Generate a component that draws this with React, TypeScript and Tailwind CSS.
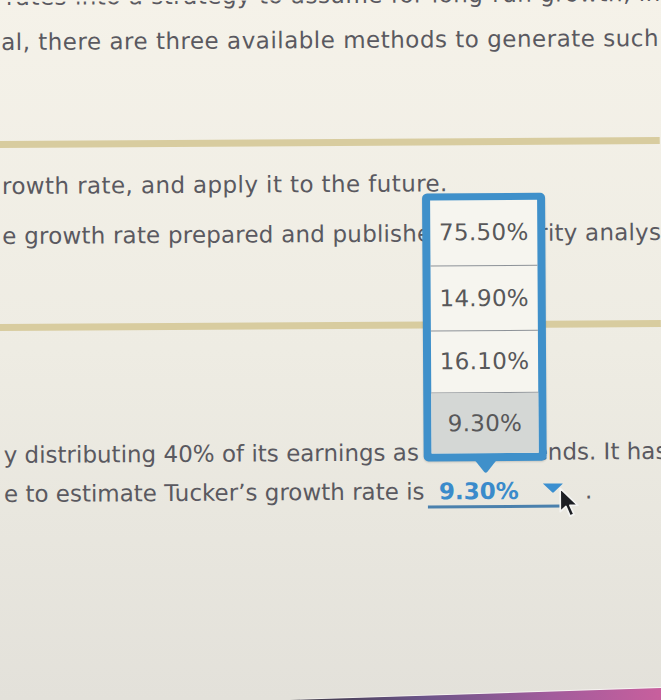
const options = [
  { label: "75.50%", h: "h-[66px]" },
  { label: "14.90%", h: "h-[65px]" },
  { label: "16.10%", h: "h-[62px]" },
  { label: "9.30%", h: "h-[60px]", selected: true },
];

function Dropdown() {
  return (
    <div className="absolute left-[423px] top-[194px] z-10 w-[123px]">
      <div className="rounded-[5px] border-x-[8px] border-t-[7px] border-b-[8px] border-[#3f90ca] bg-[#f6f5ef] shadow-[0_1px_2px_rgba(0,0,0,0.15)]">
        {options.map((o, i) => (
          <div
            key={o.label}
            className={
              "flex items-center justify-center tracking-[0.3px] text-[#58585a] " +
              o.h +
              (i < options.length - 1 ? " border-b border-[#8d9298]" : "") +
              (o.selected ? " bg-[#d4d7d5]" : "")
            }
          >
            {o.label}
          </div>
        ))}
      </div>
      {/* pointer */}
      <svg className="mx-auto -mt-[1px] block" width="22" height="13" viewBox="0 0 22 13">
        <path d="M0 0 L22 0 L12.5 12 Q11 13.5 9.5 12 Z" fill="#3f90ca" />
      </svg>
    </div>
  );
}

function Cursor() {
  return (
    <svg className="absolute left-[557px] top-[488px] z-20" width="24" height="33" viewBox="0 0 20 29">
      <path
        d="M1.5 1.5 L1.5 22 L6.5 17.5 L10 26 L13.5 24.5 L10 16.5 L17 16.5 Z"
        fill="#1d1f24"
        stroke="#f4f4f2"
        strokeWidth="1.5"
        strokeLinejoin="round"
      />
    </svg>
  );
}

export default function App() {
  return (
    <div className="relative h-[700px] w-[661px] overflow-hidden bg-gradient-to-b from-[#f5f2e9] via-[#eeece3] to-[#e3e1da]">
      <div className="relative h-full w-full origin-center rotate-[-0.35deg] font-['DejaVu_Sans','Verdana',sans-serif] text-[23px] text-[#5a5960]">
        {/* last line of the previous paragraph, cut by the top of the photo */}
        <div className="h-[10px] overflow-hidden">
          <div className="-mt-[19px] h-[28px] whitespace-nowrap pl-[8px] leading-[28px] tracking-[0.5px]">
            rates into a strategy to assume for long-run growth, in general g
          </div>
        </div>

        <div className="mt-[16px] h-[28px] whitespace-nowrap pl-[3px] leading-[28px] tracking-[0.5px]">
          al, there are three available methods to generate such estimates:
        </div>

        <div className="mt-[85px] h-[7px] bg-[#d8cc9f]" />

        <div className="mt-[24px] h-[28px] whitespace-nowrap pl-[3px] leading-[28px] tracking-[0.4px]">
          rowth rate, and apply it to the future.
        </div>

        <div className="mt-[22px] flex h-[28px] whitespace-nowrap leading-[28px] tracking-[0.2px]">
          <div className="w-[425px] shrink-0 overflow-hidden pl-[3px]">
            e growth rate prepared and published by secu
          </div>
          <div className="ml-[114px]">rity analysts.</div>
        </div>

        <div className="mt-[74px] h-[7px] bg-[#d8cc9f]" />

        <div className="mt-[110px] flex h-[28px] whitespace-nowrap leading-[28px]">
          <div className="w-[425px] shrink-0 overflow-hidden pl-[3px]">
            y distributing 40% of its earnings as divi
          </div>
          <div className="ml-[108px]">ends. It has</div>
        </div>

        <div className="mt-[11px] flex h-[28px] items-start whitespace-nowrap leading-[28px]">
          <div className="w-[427px] shrink-0 overflow-hidden pl-[3px]">
            e to estimate Tucker’s growth rate is
          </div>
          <div className="flex h-[31px] w-[135px] shrink-0 items-start border-b-[3px] border-[#4a80ad]">
            <span className="ml-[11px] font-bold text-[#3a8bcb]">9.30%</span>
            <svg className="ml-[24px] mt-[6px]" width="24" height="11" viewBox="0 0 24 11">
              <path d="M0 0 L24 0 L13 10.5 Q12 11.5 11 10.5 Z" fill="#3b8fd0" />
            </svg>
          </div>
          <span className="ml-[22px]">.</span>
        </div>

        <Dropdown />
        <Cursor />
      </div>

      {/* screen bezel at the bottom of the photo */}
      <svg className="absolute bottom-0 left-0 block" width="661" height="14" viewBox="0 0 661 14">
        <defs>
          <linearGradient id="bezel" x1="290" y1="0" x2="661" y2="0" gradientUnits="userSpaceOnUse">
            <stop offset="0" stopColor="#3a3940" />
            <stop offset="0.35" stopColor="#6b5488" />
            <stop offset="0.7" stopColor="#a25c9c" />
            <stop offset="1" stopColor="#c85f9d" />
          </linearGradient>
        </defs>
        <path d="M300 13 L661 1 L661 2.5 L300 14 Z" fill="#f7f3f2" />
        <path d="M290 14 L661 2 L661 14 Z" fill="url(#bezel)" />
      </svg>
    </div>
  );
}
